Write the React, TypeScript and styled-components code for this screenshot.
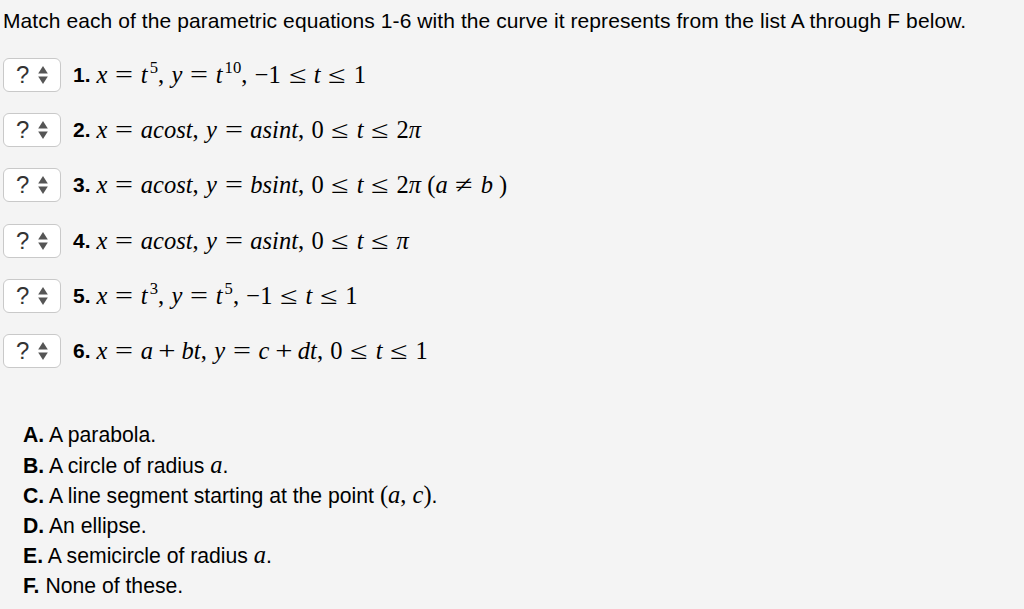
import React from "react";
import styled, { createGlobalStyle } from "styled-components";

const Global = createGlobalStyle`
  html, body { margin: 0; padding: 0; background: #f4f4f4; }
  body { font-family: "Liberation Sans", Arial, sans-serif; color: #000; }
`;

const Page = styled.div`
  padding: 9px 3px 0 3px;
  width: 1024px;
  height: 609px;
  box-sizing: border-box;
  background: #f4f4f4;
`;

const Title = styled.div`
  font-size: 21px;
  letter-spacing: 0.08px;
  line-height: 24px;
  margin: 0 0 25px 0;
  white-space: nowrap;
`;

const Rows = styled.div`
  display: flex;
  flex-direction: column;
  gap: 21.2px;
`;

const Row = styled.div`
  display: flex;
  align-items: center;
  height: 34px;
`;

const Select = styled.div`
  box-sizing: border-box;
  width: 58px;
  height: 34px;
  background: #fff;
  border: 1px solid #c9c9c9;
  border-radius: 6px;
  display: flex;
  align-items: center;
  padding-left: 12px;
  gap: 9px;
  margin-right: 12px;
`;

const Q = styled.span`
  font-size: 24px;
  color: #333;
  line-height: 1;
`;

const Arrows = styled.svg`
  width: 10px;
  height: 20px;
`;

const Num = styled.b`
  font-size: 21px;
  margin-right: 6px;
`;

const MathText = styled.span`
  font-family: "Liberation Serif", "Times New Roman", serif;
  font-size: 24.5px;
  white-space: pre;
`;

const V = styled.i`
  font-style: italic;
`;

const Rel = styled.span`
  display: inline-block;
  margin: 0 0.4em;
  transform: scaleX(1.3);
`;

const Bin = styled.span`
  display: inline-block;
  margin: 0 0.3em;
  transform: scaleX(1.25);
`;

const Sup = styled.sup`
  font-size: 0.68em;
  vertical-align: 0.6em;
  line-height: 0;
  margin-left: 2px;
`;

const Comma = styled.span`
  margin-right: 0.3em;
`;

const Answers = styled.div`
  margin: 52px 0 0 20px;
  display: flex;
  flex-direction: column;
`;

const Answer = styled.div`
  font-size: 21.2px;
  line-height: 29.6px;
  white-space: nowrap;
`;

const AMath = styled.span`
  font-family: "Liberation Serif", "Times New Roman", serif;
  font-size: 24.5px;
`;

const Picker = () => (
  <Select>
    <Q>?</Q>
    <Arrows viewBox="0 0 10 20">
      <path d="M5 1 L9.8 8.5 L0.2 8.5 Z" fill="#555" />
      <path d="M5 19 L9.8 11.5 L0.2 11.5 Z" fill="#555" />
    </Arrows>
  </Select>
);

const eqs: React.ReactNode[] = [
  <>
    <V>x</V><Rel>=</Rel><V>t</V><Sup>5</Sup><Comma>,</Comma><V>y</V><Rel>=</Rel><V>t</V><Sup>10</Sup><Comma>,</Comma>−1<Rel>≤</Rel><V>t</V><Rel>≤</Rel>1
  </>,
  <>
    <V>x</V><Rel>=</Rel><V>acost</V><Comma>,</Comma><V>y</V><Rel>=</Rel><V>asint</V><Comma>,</Comma>0<Rel>≤</Rel><V>t</V><Rel>≤</Rel>2<V>π</V>
  </>,
  <>
    <V>x</V><Rel>=</Rel><V>acost</V><Comma>,</Comma><V>y</V><Rel>=</Rel><V>bsint</V><Comma>,</Comma>0<Rel>≤</Rel><V>t</V><Rel>≤</Rel>2<V>π</V> (<V>a</V><Rel>≠</Rel><V>b</V> )
  </>,
  <>
    <V>x</V><Rel>=</Rel><V>acost</V><Comma>,</Comma><V>y</V><Rel>=</Rel><V>asint</V><Comma>,</Comma>0<Rel>≤</Rel><V>t</V><Rel>≤</Rel><V>π</V>
  </>,
  <>
    <V>x</V><Rel>=</Rel><V>t</V><Sup>3</Sup><Comma>,</Comma><V>y</V><Rel>=</Rel><V>t</V><Sup>5</Sup><Comma>,</Comma>−1<Rel>≤</Rel><V>t</V><Rel>≤</Rel>1
  </>,
  <>
    <V>x</V><Rel>=</Rel><V>a</V><Bin>+</Bin><V>bt</V><Comma>,</Comma><V>y</V><Rel>=</Rel><V>c</V><Bin>+</Bin><V>dt</V><Comma>,</Comma>0<Rel>≤</Rel><V>t</V><Rel>≤</Rel>1
  </>,
];

const answers: [string, React.ReactNode][] = [
  ["A.", <>A parabola.</>],
  ["B.", <>A circle of radius <AMath><V>a</V></AMath>.</>],
  ["C.", <>A line segment starting at the point <AMath>(<V>a</V>, <V>c</V>)</AMath>.</>],
  ["D.", <>An ellipse.</>],
  ["E.", <>A semicircle of radius <AMath><V>a</V></AMath>.</>],
  ["F.", <>None of these.</>],
];

export default function App() {
  return (
    <Page>
      <Global />
      <Title>
        Match each of the parametric equations 1-6 with the curve it represents from the list A through F below.
      </Title>
      <Rows>
        {eqs.map((e, i) => (
          <Row key={i}>
            <Picker />
            <Num>{i + 1}.</Num>
            <MathText>{e}</MathText>
          </Row>
        ))}
      </Rows>
      <Answers>
        {answers.map(([l, t]) => (
          <Answer key={l}>
            <b>{l}</b> {t}
          </Answer>
        ))}
      </Answers>
    </Page>
  );
}
